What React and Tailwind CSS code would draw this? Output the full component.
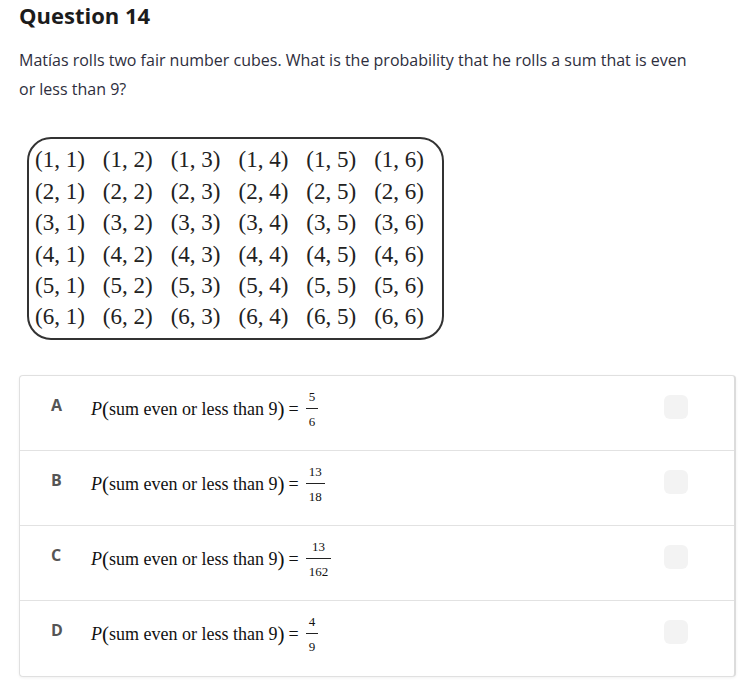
import React from "react";

const serif = { fontFamily: '"Liberation Serif", "Times New Roman", serif' };

const choices = [
  { letter: "A", num: "5", den: "6" },
  { letter: "B", num: "13", den: "18" },
  { letter: "C", num: "13", den: "162" },
  { letter: "D", num: "4", den: "9" },
];

function Fraction({ num, den }) {
  return (
    <span className="inline-flex flex-col items-center ml-[7px] text-[13px] leading-[13px]" style={serif}>
      <span className="px-[3px] pb-[5px]" style={serif}>{num}</span>
      <span className="px-[3px] border-t border-[#222] w-full text-center pt-[6px]" style={serif}>{den}</span>
    </span>
  );
}

function Choice({ letter, num, den, last }) {
  return (
    <div className={`flex items-start h-[75px] pl-[31px] pr-[46px] ${last ? "" : "border-b border-[#e2e2e2]"}`}>
      <span className="mt-[19px] w-[40px] text-[16px] leading-[20px] font-bold text-[#555]" style={{ fontFamily: '"Open Sans", sans-serif' }}>{letter}</span>
      <span className="mt-[14px] flex-1 flex items-center text-[18px] text-[#111]" style={serif}>
        <span className="italic">P</span>
        <span className="text-[21px] leading-none">(</span>
        <span>sum even or less than 9</span>
        <span className="text-[21px] leading-none">)</span>
        <span className="ml-[4px]">=</span>
        <Fraction num={num} den={den} />
      </span>
      <span className="mt-[19px] w-[24px] h-[24px] rounded-[6px] bg-[#f3f3f3]" />
    </div>
  );
}

export default function App() {
  const rows = [1, 2, 3, 4, 5, 6];
  return (
    <div className="bg-white min-h-[686px] px-[19px] text-[#2b2b3a]" style={{ fontFamily: '"Open Sans", sans-serif' }}>
      <h1 className="text-[22px] font-bold text-[#1c1c1c] leading-[30px]">Question 14</h1>
      <p className="mt-[16px] max-w-[672px] text-[16px] leading-[29px] text-[#2e2e3d]">
        Matías rolls two fair number cubes. What is the probability that he rolls a sum that is even or less than 9?
      </p>

      <div className="mt-[33px] ml-[8px] w-[417px] h-[203px] border-[2px] border-[#333] rounded-[24px] flex flex-col justify-center pl-[6px]" style={serif}>
        {rows.map((r) => (
          <div key={r} className="flex text-[23px] leading-[31.4px] text-[#222]">
            {rows.map((c) => (
              <span key={c} className="w-[70.2px] whitespace-nowrap">({r}, {c})</span>
            ))}
          </div>
        ))}
      </div>

      <div className="mt-[35px] w-[717px] border border-[#e0e0e0] border-r-[2px] border-r-[#dcdcdc] rounded-[4px] bg-white shadow-[0_1px_3px_rgba(0,0,0,0.06)]">
        {choices.map((ch, i) => (
          <Choice key={ch.letter} {...ch} last={i === choices.length - 1} />
        ))}
      </div>
    </div>
  );
}
